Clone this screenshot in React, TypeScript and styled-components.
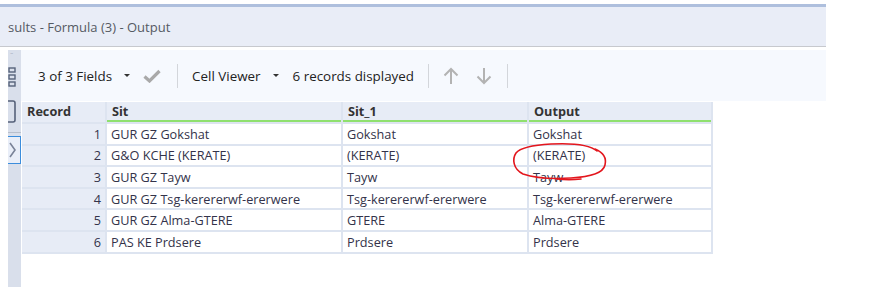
import styled, { createGlobalStyle } from 'styled-components'

const GlobalStyle = createGlobalStyle`
  body {
    margin: 0;
    background: #fff;
    font-family: "Open Sans", "Noto Sans", sans-serif;
    color: #333;
  }
`

const rows = [
  { id: 1, sit: 'GUR GZ Gokshat', sit1: 'Gokshat', output: 'Gokshat' },
  { id: 2, sit: 'G&O KCHE (KERATE)', sit1: '(KERATE)', output: '(KERATE)' },
  { id: 3, sit: 'GUR GZ Tayw', sit1: 'Tayw', output: 'Tayw' },
  { id: 4, sit: 'GUR GZ Tsg-kerererwf-ererwere', sit1: 'Tsg-kerererwf-ererwere', output: 'Tsg-kerererwf-ererwere' },
  { id: 5, sit: 'GUR GZ Alma-GTERE', sit1: 'GTERE', output: 'Alma-GTERE' },
  { id: 6, sit: 'PAS KE Prdsere', sit1: 'Prdsere', output: 'Prdsere' },
]

export default function App() {
  return (
    <>
      <GlobalStyle />
      <Window>
        <TitleBar>
          <TitleText>sults - Formula (3) - Output</TitleText>
        </TitleBar>
        <Body>
          <Sidebar>
            <Grip>····</Grip>
            <SideIcon $top={17}>
              <svg width="13" height="22" viewBox="0 0 13 22">
                <rect x="1" y="1" width="6" height="4" fill="none" stroke="#56627a" strokeWidth="1.4" />
                <rect x="1" y="8" width="6" height="4" fill="none" stroke="#56627a" strokeWidth="1.4" />
                <rect x="1" y="15" width="6" height="4" fill="none" stroke="#56627a" strokeWidth="1.4" />
              </svg>
            </SideIcon>
            <SideIcon $top={50}>
              <svg width="13" height="23" viewBox="0 0 13 23">
                <rect x="-4" y="1" width="11" height="21" rx="2" fill="none" stroke="#56627a" strokeWidth="1.6" />
              </svg>
            </SideIcon>
            <SideRule />
            <SelectedTab>
              <svg width="10" height="20" viewBox="0 0 10 20">
                <path d="M2 3 L7 10 L2 17" fill="none" stroke="#7a8398" strokeWidth="1.6" />
              </svg>
            </SelectedTab>
          </Sidebar>
          <Main>
            <Toolbar>
              <Label>3 of 3 Fields</Label>
              <Caret $gap={12} />
              <ToolIcon $gap={13}>
                <svg width="18" height="14" viewBox="0 0 18 14">
                  <path d="M1.5 7.5 L6.5 12 L16.5 2" fill="none" stroke="#a9a9a9" strokeWidth="3.2" />
                </svg>
              </ToolIcon>
              <Separator $gap={16} />
              <Label $gap={14}>Cell Viewer</Label>
              <Caret $gap={12} />
              <Label $gap={14}>6 records displayed</Label>
              <Separator $gap={14} />
              <ToolIcon $gap={14}>
                <svg width="16" height="18" viewBox="0 0 16 18">
                  <path d="M8 17 V2 M1.5 8.5 L8 2 L14.5 8.5" fill="none" stroke="#b3b3b3" strokeWidth="2" />
                </svg>
              </ToolIcon>
              <ToolIcon $gap={17}>
                <svg width="16" height="18" viewBox="0 0 16 18">
                  <path d="M8 1 V16 M1.5 9.5 L8 16 L14.5 9.5" fill="none" stroke="#b3b3b3" strokeWidth="2" />
                </svg>
              </ToolIcon>
              <Separator $gap={15} />
            </Toolbar>
            <TableArea>
              <Table>
                <HeadCell>Record</HeadCell>
                <HeadCell $field>Sit</HeadCell>
                <HeadCell $field>Sit_1</HeadCell>
                <HeadCell $field>Output</HeadCell>
                {rows.map((r) => (
                  <Row key={r.id}>
                    <RecordCell>{r.id}</RecordCell>
                    <Cell>{r.sit}</Cell>
                    <Cell>{r.sit1}</Cell>
                    <Cell>{r.output}</Cell>
                  </Row>
                ))}
              </Table>
              <Annotation width="104" height="46" viewBox="0 0 104 46">
                <path
                  d="M86 10 C78 3, 60 2, 40 3 C22 4, 9 7, 5 12 C1 18, 2 28, 12 33 C24 37, 44 38, 60 37 C78 36, 92 33, 94 24 C96 16, 91 11, 84 8"
                  fill="none"
                  stroke="#e3161d"
                  strokeWidth="1.6"
                  strokeLinecap="round"
                />
                <path d="M46 38 C54 39, 62 39, 70 38" fill="none" stroke="#e3161d" strokeWidth="1.6" strokeLinecap="round" />
              </Annotation>
            </TableArea>
          </Main>
        </Body>
      </Window>
    </>
  )
}

const Window = styled.div`
  width: 826px;
  height: 302px;
  display: flex;
  flex-direction: column;
`

const TitleBar = styled.div`
  box-sizing: border-box;
  margin-top: 4px;
  height: 43px;
  border-top: 3px solid #aebfdd;
  border-bottom: 1px solid #c7c9ce;
  background: #e9edf7;
  display: flex;
  align-items: center;
  padding-left: 8px;
  padding-top: 1px;
`

const TitleText = styled.span`
  font-size: 13px;
  color: #555a63;
`

const Body = styled.div`
  flex: 1;
  display: flex;
  padding-top: 3px;
  align-items: flex-start;
`

const Sidebar = styled.div`
  position: relative;
  margin-left: 8px;
  width: 13px;
  height: 237px;
  background: #d9dfeb;
  overflow: hidden;
`

const Grip = styled.div`
  font-size: 6px;
  line-height: 6px;
  color: #9aa3b5;
  letter-spacing: -1px;
  padding-left: 2px;
`

const SideIcon = styled.div<{ $top: number }>`
  position: absolute;
  left: 0;
  top: ${({ $top }) => $top}px;
  display: flex;
`

const SideRule = styled.div`
  position: absolute;
  left: 0;
  top: 82px;
  width: 13px;
  height: 1px;
  background: #b8bfcc;
`

const SelectedTab = styled.div`
  position: absolute;
  left: 0;
  top: 86px;
  width: 12px;
  height: 26px;
  border: 1px solid #3c8ddc;
  border-left: none;
  background: #e9eef8;
  display: flex;
  align-items: center;
`

const Main = styled.div`
  width: 805px;
  display: flex;
  flex-direction: column;
`

const Toolbar = styled.div`
  height: 51px;
  background: #f6f9fe;
  display: flex;
  align-items: center;
  padding-left: 17px;
`

const Label = styled.span<{ $gap?: number }>`
  margin-left: ${({ $gap }) => $gap ?? 0}px;
  font-size: 13.4px;
  color: #222;
  white-space: nowrap;
`

const Caret = styled.span<{ $gap: number }>`
  margin-left: ${({ $gap }) => $gap}px;
  width: 0;
  height: 0;
  border-left: 3px solid transparent;
  border-right: 3px solid transparent;
  border-top: 3px solid #333;
`

const ToolIcon = styled.span<{ $gap: number }>`
  margin-left: ${({ $gap }) => $gap}px;
  display: flex;
`

const Separator = styled.span<{ $gap: number }>`
  margin-left: ${({ $gap }) => $gap}px;
  width: 1px;
  height: 24px;
  background: #d3d6db;
`

const TableArea = styled.div`
  position: relative;
  padding-top: 1px;
  padding-left: 1px;
  background: #fff;
  height: 185px;
`

const Table = styled.div`
  display: grid;
  grid-template-columns: 83px 234px 184px 182px;
  grid-template-rows: 20px;
  grid-auto-rows: 19.6px;
  column-gap: 2px;
  row-gap: 2px;
  width: max-content;
  padding: 0 2px 2px 0;
  background: #dde4f0;
  font-size: 12.7px;
`

const Row = styled.div`
  display: contents;
`

const HeadCell = styled.div<{ $field?: boolean }>`
  box-sizing: border-box;
  background: #e7ecf6;
  font-weight: 700;
  color: #333;
  padding-left: 5px;
  display: flex;
  align-items: center;
  border-bottom: 2px solid ${({ $field }) => ($field ? '#8fe06e' : '#e7ecf6')};
`

const Cell = styled.div`
  background: #fff;
  padding-left: 4px;
  display: flex;
  align-items: center;
  white-space: nowrap;
  color: #33334a;
`

const RecordCell = styled(Cell)`
  background: #e7ecf6;
  justify-content: flex-end;
  padding-left: 0;
  padding-right: 4px;
`

const Annotation = styled.svg`
  position: absolute;
  left: 490px;
  top: 40px;
  pointer-events: none;
`
